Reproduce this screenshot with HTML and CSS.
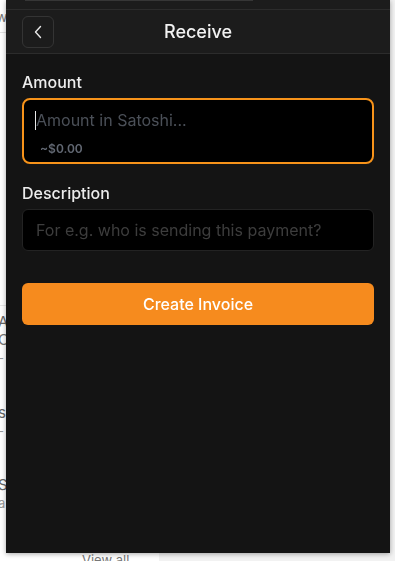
FILE: index.html
```html
<!DOCTYPE html>
<html lang="en">
<head>
<meta charset="utf-8">
<title>Receive</title>
<link rel="stylesheet" href="styles.css">
</head>
<body>
<div class="page">
  <aside class="sidebar">
    <div class="side-head">w</div>
    <div class="side-gap"></div>
    <div class="side-item item-a">
      <div class="si-title">A</div>
      <div class="si-sub">C</div>
      <div class="si-meta">-</div>
    </div>
    <div class="side-item item-b">
      <div class="si-title">s</div>
      <div class="si-meta">-</div>
    </div>
    <div class="side-item item-c">
      <div class="si-title">S</div>
      <div class="si-meta">a</div>
    </div>
    <div class="view-all">View all</div>
  </aside>
  <main class="main"></main>
</div>

<div class="modal">
  <div class="modal-top"><div class="top-line"></div></div>
  <header class="modal-header">
    <button class="back-btn" aria-label="Back">
      <svg width="16" height="16" viewBox="0 0 16 16" fill="none"><path d="M10.5 2.5 L5.5 8 L10.5 13.5" stroke="#e8e8e8" stroke-width="1.4" stroke-linecap="round" stroke-linejoin="round"/></svg>
    </button>
    <h1 class="modal-title">Receive</h1>
    <span class="header-spacer"></span>
  </header>
  <form class="modal-body">
    <label class="field-label">Amount</label>
    <div class="amount-box">
      <div class="amount-input"><span class="caret"></span><span class="ph">Amount in Satoshi...</span></div>
      <div class="fiat">~$0.00</div>
    </div>
    <label class="field-label desc-label">Description</label>
    <div class="desc-box"><span class="ph-dark">For e.g. who is sending this payment?</span></div>
    <button type="button" class="create-btn">Create Invoice</button>
  </form>
</div>
</body>
</html>
```

FILE: styles.css
```css
* { box-sizing: border-box; }
html, body { margin: 0; padding: 0; }
body {
  width: 395px;
  height: 561px;
  overflow: hidden;
  font-family: Inter, "Noto Sans", sans-serif;
  background: #f2f2f2;
}
.page {
  display: flex;
  height: 561px;
}
.sidebar {
  width: 159px;
  background: #fff;
  display: flex;
  flex-direction: column;
  color: #555;
  font-size: 15px;
}
.side-head {
  height: 33px;
  border-bottom: 1px solid #e2e2e2;
  padding: 8px 0 0 0;
  margin-left: -4px;
  color: #777;
  font-size: 14px;
}
.side-gap { height: 273px; border-bottom: 1px solid #e8e8e8; }
.side-item {
  display: flex;
  flex-direction: column;
  padding: 7px 0 0 0;
  margin-left: -2px;
  line-height: 18px;
}
.item-a { height: 91px; }
.item-b { height: 72px; }
.item-c { height: 60px; }
.si-title { color: #666; }
.si-sub { color: #777; }
.si-meta { color: #999; font-size: 13px; }
.view-all {
  margin-top: auto;
  padding-left: 82px;
  color: #777;
  font-size: 13px;
  line-height: 14px;
  height: 8px;
  overflow: visible;
}
.main { flex: 1; background: #f2f2f2; }

.modal {
  position: fixed;
  left: 6px;
  top: 0;
  width: 384px;
  height: 553px;
  background: #141414;
  box-shadow: 0 1px 5px rgba(0,0,0,0.35);
  display: flex;
  flex-direction: column;
}
.modal-top {
  height: 10px;
  background: #1c1c1c;
  border-bottom: 1px solid #2c2c2c;
}
.top-line {
  margin-left: 19px;
  width: 228px;
  height: 1px;
  background: #363636;
}
.modal-header {
  height: 44px;
  background: #1c1c1c;
  border-bottom: 1px solid #2c2c2c;
  display: flex;
  align-items: center;
  padding: 0 16px;
}
.back-btn {
  width: 32px;
  height: 32px;
  border: 1px solid #343434;
  border-radius: 6px;
  background: transparent;
  display: flex;
  align-items: center;
  justify-content: center;
  padding: 0;
}
.modal-title {
  flex: 1;
  margin: 0;
  text-align: center;
  color: #f2f2f2;
  font-size: 18px;
  font-weight: 500;
  line-height: 24px;
}
.header-spacer { width: 32px; }

.modal-body {
  display: flex;
  flex-direction: column;
  padding: 18px 16px 0;
  margin: 0;
}
.field-label {
  color: #ececec;
  font-size: 16px;
  font-weight: 500;
  line-height: 20px;
  margin-bottom: 6px;
}
.amount-box {
  height: 66px;
  border: 2px solid #f7931a;
  border-radius: 8px;
  background: #000;
  padding: 8px 12px 5px 11px;
  display: flex;
  flex-direction: column;
}
.amount-input {
  display: flex;
  align-items: center;
  height: 24px;
  font-size: 16px;
  line-height: 24px;
}
.caret {
  width: 1px;
  height: 19px;
  background: #e8e8e8;
  margin-right: 0;
}
.ph { color: #4b5058; }
.fiat {
  margin-top: 9px;
  padding-left: 5px;
  color: #626873;
  font-size: 12px;
  font-weight: 600;
  line-height: 16px;
}
.desc-label { margin-top: 19px; }
.desc-box {
  height: 42px;
  border: 1px solid #232323;
  border-radius: 6px;
  background: #000;
  padding: 0 13px;
  display: flex;
  align-items: center;
  font-size: 16px;
}
.ph-dark { color: #3d3d3d; }
.create-btn {
  margin-top: 32px;
  height: 42px;
  border: none;
  border-radius: 6px;
  background: #f68b1e;
  color: #fff;
  font-family: inherit;
  font-size: 16px;
  font-weight: 500;
}
```
